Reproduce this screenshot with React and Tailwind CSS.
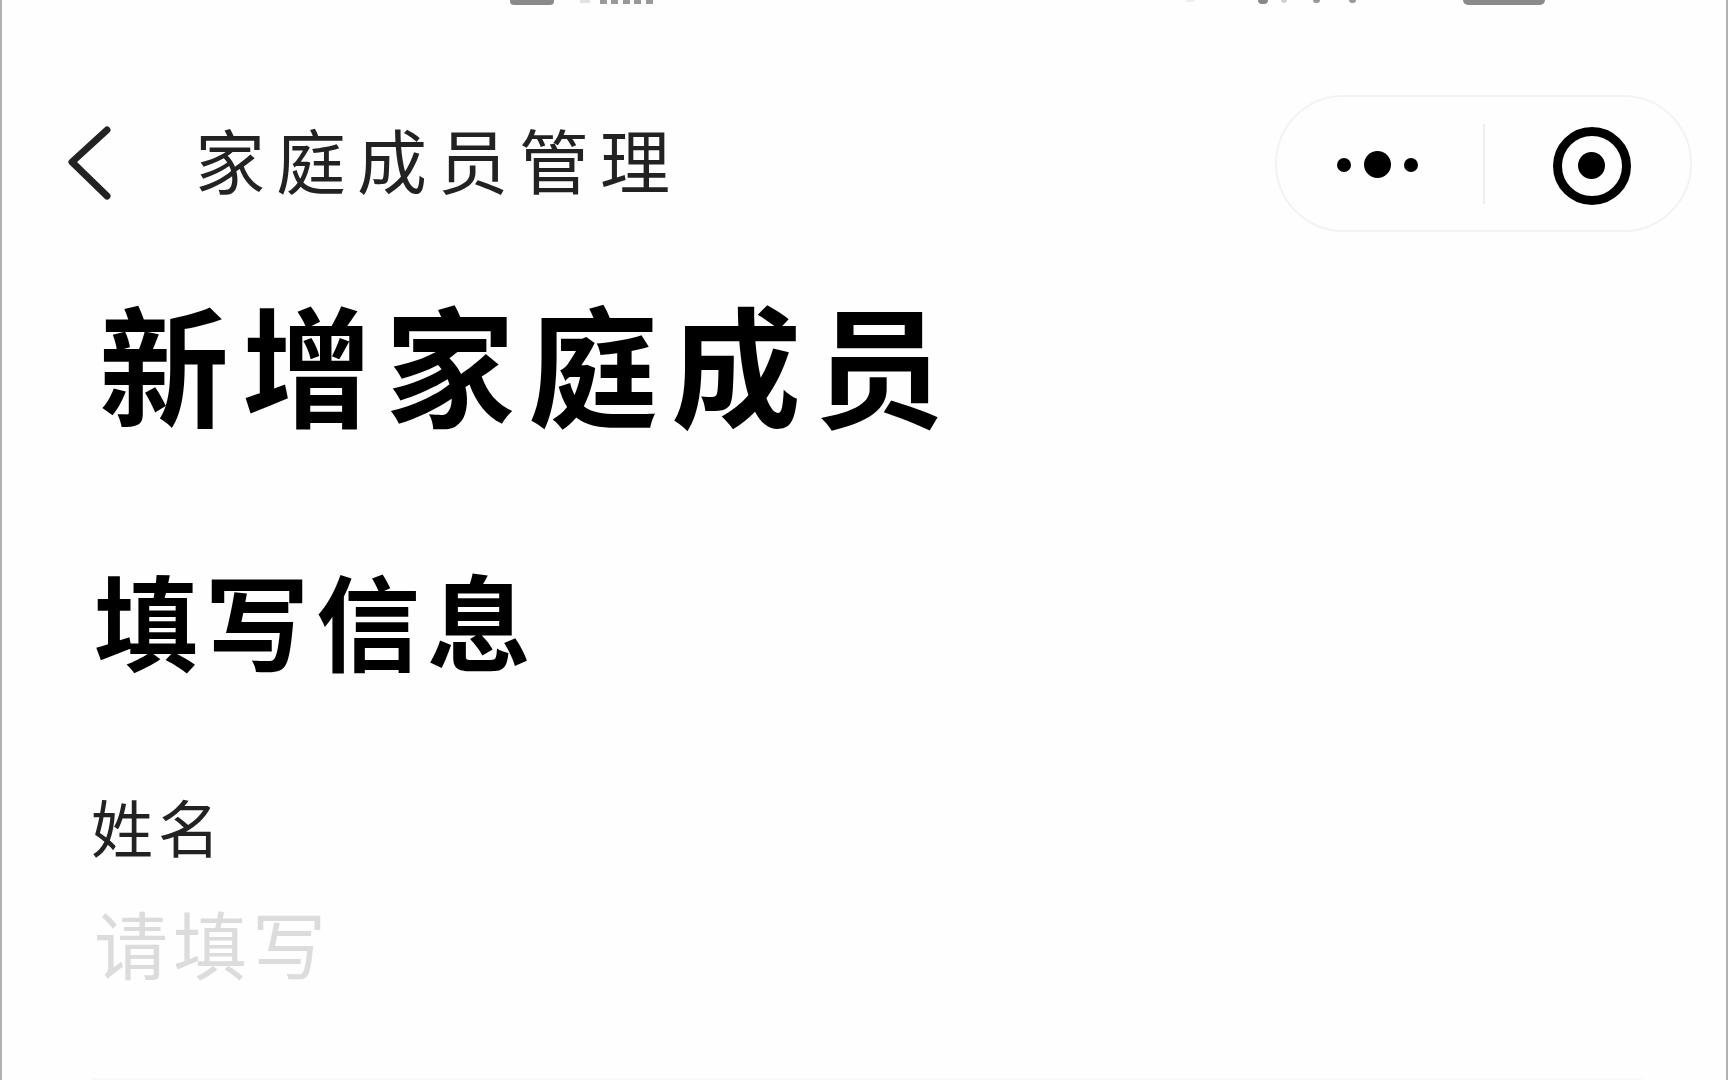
const cjk = "font-['Noto_Sans_CJK_SC','Noto_Sans',sans-serif]";

const App = () => {
  return (
    <div className={`h-[1080px] overflow-hidden bg-[#fefefe] border-x-2 border-x-[#b0b0b0] ${cjk}`}>
      {/* status bar, cut off by the top of the picture */}
      <div className="h-[5px] flex items-start">
        <div className="ml-[508px] w-[44px] h-[5px] bg-[#8a8a8a] rounded-b-sm" />
        <div className="ml-[26px] w-[10px] h-[3px] bg-[#e2e2e2]" />
        <div className="ml-[10px] w-[56px] h-[4px] bg-[repeating-linear-gradient(90deg,#999_0_7px,transparent_7px_11.5px)]" />
        <div className="ml-[530px] w-[8px] h-[2px] bg-[#eeeeee]" />
        <div className="ml-[64px] w-[10px] h-[4px] bg-[#888] rounded-b-full" />
        <div className="ml-[13px] w-[6px] h-[3px] bg-[#d0d0d0] rounded-b-full" />
        <div className="ml-[26px] w-[7px] h-[3px] bg-[#999] rounded-b-full" />
        <div className="ml-[29px] w-[7px] h-[3px] bg-[#999] rounded-b-full" />
        <div className="ml-[107px] w-[82px] h-[5px] bg-[#8a8a8a] rounded-b-md" />
      </div>

      {/* nav bar */}
      <div className="mt-[90px] h-[137px] flex items-center pl-[66px] pr-[34px]">
        <svg width="44" height="76" viewBox="0 0 44 76" fill="none" stroke="#222" strokeWidth="7" strokeLinecap="round" strokeLinejoin="round">
          <path d="M39 4 L4 36 L39 70" />
        </svg>
        <h1 className="ml-[83px] mb-[10px] text-[70px] leading-none tracking-[11px] text-[#222]">家庭成员管理</h1>
        <div className="ml-auto w-[417px] h-[137px] rounded-full border-2 border-[#f4f2f4] flex items-center">
          <div className="flex-1 pt-[2px] flex items-center justify-center">
            <div className="mr-[4px] flex items-center gap-[13px]">
              <span className="w-[14px] h-[14px] rounded-full bg-black" />
              <span className="w-[27px] h-[27px] rounded-full bg-black" />
              <span className="w-[14px] h-[14px] rounded-full bg-black" />
            </div>
          </div>
          <div className="w-[2px] h-[80px] bg-[#efefef]" />
          <div className="flex-1 pt-[4px] flex items-center justify-center">
            <div className="ml-[9px] w-[78px] h-[78px] rounded-full border-[9px] border-black flex items-center justify-center">
              <span className="w-[27px] h-[27px] rounded-full bg-black" />
            </div>
          </div>
        </div>
      </div>

      <div className="pl-[92px] pr-[90px]">
        <h2 className="mt-[53px] ml-[5px] text-[130px] leading-[150px] font-bold tracking-[13px] text-black">新增家庭成员</h2>
        <h3 className="mt-[129px] text-[104px] leading-[110px] font-bold tracking-[7px] text-black">填写信息</h3>
        <label className="block mt-[120px] -ml-[3px] text-[62px] leading-[64px] tracking-[5px] text-[#222]">姓名</label>
        <div className="mt-[45px] h-[78px] text-[74px] leading-[78px] tracking-[5px] text-[#dcdcdc]">请填写</div>
        <div className="mt-[97px] -ml-[2px] w-[1550px] border-b-2 border-[#f9f9f9]" />
      </div>
    </div>
  );
};

export default App;
